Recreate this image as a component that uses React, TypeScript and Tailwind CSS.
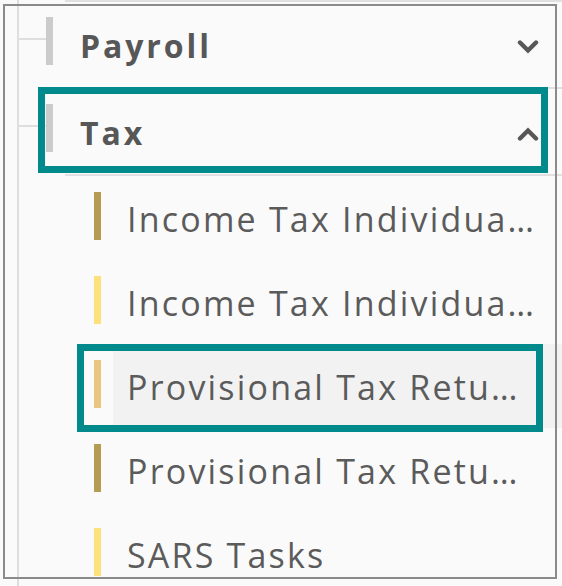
const font = { fontFamily: '"Open Sans", "Liberation Sans", sans-serif' };

function Chevron({ up }: { up?: boolean }) {
  return (
    <svg width="22" height="14" viewBox="0 0 22 14" className="shrink-0">
      <polyline
        points={up ? "3,11.5 11,3.5 19,11.5" : "3,2.5 11,10.5 19,2.5"}
        fill="none"
        stroke="#575757"
        strokeWidth="4.4"
        strokeLinecap="round"
        strokeLinejoin="miter"
      />
    </svg>
  );
}

function GroupRow({ label, up }: { label: string; up?: boolean }) {
  return (
    <div className="flex items-start h-[87px]">
      <div className="w-[27px] h-[2px] bg-[#dedede] mt-[36px] shrink-0" />
      <div className="w-[7px] h-[48px] bg-[#cbcbcb] mt-[15px] shrink-0" />
      <div className="ml-[12px] flex-1 h-[87px] border-b-2 border-[#e0e0e0] flex items-center pl-[15px] pr-[23px]">
        <span className="flex-1 text-[32px] font-bold tracking-[2.9px] text-[#575757] mt-[2px] whitespace-nowrap">
          {label}
        </span>
        <span className="mt-[4px]">
          <Chevron up={up} />
        </span>
      </div>
    </div>
  );
}

const items = [
  { label: "Income Tax Individua…", color: "bg-[#b69b53]" },
  { label: "Income Tax Individua…", color: "bg-[#fde17b]" },
  { label: "Provisional Tax Retu…", color: "bg-[#e8c67f]", active: true },
  { label: "Provisional Tax Retu…", color: "bg-[#b69b53]" },
  { label: "SARS Tasks", color: "bg-[#fde17b]" },
];

export default function App() {
  return (
    <div className="relative w-[562px] h-[586px] overflow-hidden bg-[#fafafa]" style={font}>
      <div className="ml-[17px] border-l-2 border-[#dedede] min-h-[586px]">
        <div className="ml-[46px] h-[2px] bg-[#e0e0e0]" />
        <GroupRow label="Payroll" />
        <GroupRow label="Tax" up />

        {items.map((it, i) => (
          <div key={i} className="flex items-center h-[84px]">
            <div className={`ml-[75px] w-[7px] h-[48px] mb-[4px] shrink-0 ${it.color}`} />
            <div
              className={`ml-[12px] flex-1 h-full flex items-center pl-[14px] pr-[20px] ${
                it.active ? "bg-[#f2f2f2]" : ""
              }`}
            >
              <span className="text-[34px] tracking-[2.2px] text-[#5b5b5b] mt-[3px] whitespace-nowrap overflow-hidden text-ellipsis">
                {it.label}
              </span>
            </div>
          </div>
        ))}
      </div>

      {/* callout frame */}
      <div className="absolute left-[3px] top-[4px] w-[554px] h-[575px] border-2 border-[#8a8a8a]" />

      {/* highlight boxes */}
      <div className="absolute left-[38px] top-[87px] w-[510px] h-[86px] border-[7px] border-[#008a8b]" />
      <div className="absolute left-[77px] top-[344px] w-[466px] h-[88px] border-[7px] border-[#008a8b]" />
    </div>
  );
}
